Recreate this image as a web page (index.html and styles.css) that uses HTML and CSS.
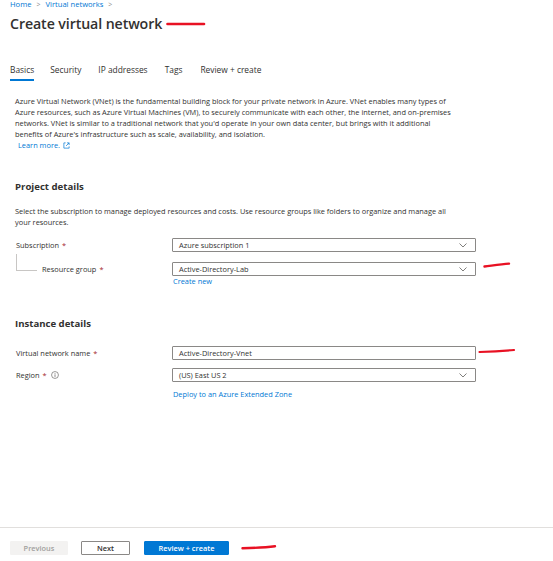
FILE: index.html
```html
<!DOCTYPE html>
<html>
<head>
<meta charset="utf-8">
<link rel="stylesheet" href="styles.css">
</head>
<body>
<div class="page">
  <div class="main">
    <div class="breadcrumb"><a>Home</a><span class="sep">&gt;</span><a>Virtual networks</a><span class="sep">&gt;</span></div>
    <h1 class="title">Create virtual network</h1>
    <nav class="tabs">
      <span class="tab active">Basics</span>
      <span class="tab">Security</span>
      <span class="tab">IP addresses</span>
      <span class="tab">Tags</span>
      <span class="tab">Review + create</span>
    </nav>
    <p class="intro">Azure Virtual Network (VNet) is the fundamental building block for your private network in Azure. VNet enables many types of Azure resources, such as Azure Virtual Machines (VM), to securely communicate with each other, the internet, and on-premises networks. VNet is similar to a traditional network that you'd operate in your own data center, but brings with it additional benefits of Azure's infrastructure such as scale, availability, and isolation.</p>
    <a class="learn">Learn more. <svg class="ext" viewBox="0 0 8 8" width="7" height="7"><path d="M3 1H1v6h6V5M4.5 1H7v2.5M7 1L3.5 4.5" fill="none" stroke="#0078d4" stroke-width="0.8"/></svg></a>

    <h2 class="section">Project details</h2>
    <p class="desc">Select the subscription to manage deployed resources and costs. Use resource groups like folders to organize and manage all your resources.</p>

    <div class="row top">
      <label class="label">Subscription <span class="req">*</span></label>
      <div class="control">
        <div class="select"><span>Azure subscription 1</span><svg class="chev" viewBox="0 0 8 5" width="8" height="5"><path d="M0.5 0.5L4 4 7.5 0.5" fill="none" stroke="#605e5c" stroke-width="0.8"/></svg></div>
      </div>
    </div>
    <div class="row child">
      <label class="label sub">Resource group <span class="req">*</span></label>
      <div class="control">
        <div class="select"><span>Active-Directory-Lab</span><svg class="chev" viewBox="0 0 8 5" width="8" height="5"><path d="M0.5 0.5L4 4 7.5 0.5" fill="none" stroke="#605e5c" stroke-width="0.8"/></svg></div>
        <a class="link under">Create new</a>
        <svg class="mark mark-rg" viewBox="0 0 28 6" width="28" height="6"><path d="M1.5 4.5C9 3.6 18 2.4 26 1.6" stroke="#e81123" stroke-width="2.4" stroke-linecap="round" fill="none"/></svg>
      </div>
    </div>

    <h2 class="section s2">Instance details</h2>
    <div class="row first">
      <label class="label">Virtual network name <span class="req">*</span></label>
      <div class="control">
        <div class="input">Active-Directory-Vnet</div>
        <svg class="mark mark-vn" viewBox="0 0 38 6" width="38" height="6"><path d="M1.5 4C12 3.6 24 3 36 2" stroke="#e81123" stroke-width="2.2" stroke-linecap="round" fill="none"/></svg>
      </div>
    </div>
    <div class="row region">
      <label class="label">Region <span class="req">*</span> <svg class="info" viewBox="0 0 10 10" width="8" height="8"><circle cx="5" cy="5" r="4.3" fill="none" stroke="#605e5c" stroke-width="0.8"/><path d="M5 4.2V7.4M5 2.6v0.9" stroke="#605e5c" stroke-width="0.9"/></svg></label>
      <div class="control">
        <div class="select"><span>(US) East US 2</span><svg class="chev" viewBox="0 0 8 5" width="8" height="5"><path d="M0.5 0.5L4 4 7.5 0.5" fill="none" stroke="#605e5c" stroke-width="0.8"/></svg></div>
        <a class="link deploy">Deploy to an Azure Extended Zone</a>
      </div>
    </div>
    <svg class="mark mark-title" viewBox="0 0 40 6" width="40" height="6"><path d="M1.5 3H38" stroke="#e81123" stroke-width="2.6" stroke-linecap="round" fill="none"/></svg>
  </div>

  <footer class="footer">
    <button class="btn prev">Previous</button>
    <button class="btn next">Next</button>
    <button class="btn primary">Review + create</button>
    <svg class="foot-mark" viewBox="0 0 36 6" width="36" height="6"><path d="M1.5 4.2C12 4 24 3.6 34 2.2" stroke="#e81123" stroke-width="2.4" stroke-linecap="round" fill="none"/></svg>
  </footer>
</div>
</body>
</html>
```

FILE: styles.css
```css
* { box-sizing: border-box; }
html, body { margin: 0; padding: 0; background: #fff; }
body {
  font-family: "Segoe UI", "Open Sans", "Noto Sans", sans-serif;
  color: #323130;
  width: 553px;
  height: 561px;
  overflow: hidden;
}
.page {
  height: 561px;
  display: flex;
  flex-direction: column;
}
.main {
  flex: 1;
  position: relative;
  padding: 0 10px 0 10px;
}
a { color: #0078d4; text-decoration: none; }

.breadcrumb {
  font-size: 7.6px;
  line-height: 9px;
  margin-top: 0;
  color: #0078d4;
  display: flex;
  align-items: center;
}
.breadcrumb .sep { color: #8a8886; margin: 0 5px; font-size: 7px; }

.title {
  margin: 6px 0 0 0;
  font-size: 14.2px;
  line-height: 18px;
  font-weight: 600;
  color: #323130;
  letter-spacing: -0.1px;
}
.mark { position: absolute; }
.mark-title { left: 166px; top: 21px; }

.tabs {
  display: flex;
  margin-top: 31px;
  font-size: 8.4px;
  line-height: 11px;
}
.tab {
  color: #323130;
  padding-bottom: 4px;
  margin-right: 17px;
  border-bottom: 2px solid transparent;
}
.tab:nth-child(1) { margin-right: 16px; }
.tab:nth-child(4) { margin-right: 18px; }
.tab.active { border-bottom-color: #0078d4; }

.intro {
  margin: 15px 0 0 5px;
  font-size: 7.4px;
  line-height: 11px;
  width: 440px;
  color: #323130;
}
.learn {
  display: block;
  margin: 0 0 0 8px;
  font-size: 7.4px;
  line-height: 10px;
}
.ext { vertical-align: -1px; margin-left: 1px; }

.section {
  margin: 31px 0 0 5px;
  font-size: 9.6px;
  line-height: 12px;
  font-weight: 700;
  color: #323130;
}
.section.s2 { margin-top: 31px; }

.desc {
  margin: 13px 0 0 5px;
  font-size: 7.4px;
  line-height: 11px;
  width: 445px;
}

.row {
  display: flex;
  align-items: flex-start;
  margin-top: 9px;
  margin-left: 6px;
}
.row.top { margin-top: 10px; }
.row.first { margin-top: 16px; }
.row.region { margin-top: 8px; }
.row.child { position: relative; margin-top: 10px; }
.row.child::before {
  content: "";
  position: absolute;
  left: 0;
  top: -8px;
  width: 20px;
  height: 16px;
  border-left: 1px solid #c8c6c4;
  border-bottom: 1px solid #c8c6c4;
}
.label {
  width: 156px;
  flex: none;
  font-size: 7.4px;
  line-height: 14px;
  color: #323130;
  display: flex;
  align-items: center;
  gap: 2px;
}
.label.sub { padding-left: 26px; }
.req { color: #a4262c; margin-left: 1px; }
.info { margin-left: 2px; }
.control { width: 304px; position: relative; }
.select, .input {
  height: 14px;
  border: 1px solid #8a8886;
  border-radius: 1px;
  font-size: 7.4px;
  line-height: 12px;
  padding: 0 6px;
  display: flex;
  align-items: center;
  justify-content: space-between;
  color: #323130;
}
.chev { margin-right: 2px; }
.link {
  display: block;
  font-size: 7.4px;
  line-height: 11px;
  margin-left: 1px;
}
.under { margin-top: 0px; }
.deploy { margin-top: 7px; }
.mark-rg { left: 311px; top: 0px; }
.mark-vn { left: 306px; top: 2px; }

.footer {
  flex: none;
  height: 34px;
  border-top: 1px solid #e1dfdd;
  display: flex;
  align-items: flex-start;
  padding: 13px 0 0 10px;
  position: relative;
}
.btn {
  font-family: inherit;
  font-size: 7.4px;
  height: 14px;
  padding: 0;
  border-radius: 1px;
  font-weight: 600;
  line-height: 12px;
}
.prev { width: 58px; background: #f3f2f1; border: 1px solid #f3f2f1; color: #a19f9d; margin-right: 13px; }
.next { width: 49px; background: #fff; border: 1px solid #8a8886; color: #323130; margin-right: 14px; }
.primary { width: 85px; background: #0078d4; border: 1px solid #0078d4; color: #fff; }
.foot-mark { margin-left: 12px; margin-top: 3px; }
```
